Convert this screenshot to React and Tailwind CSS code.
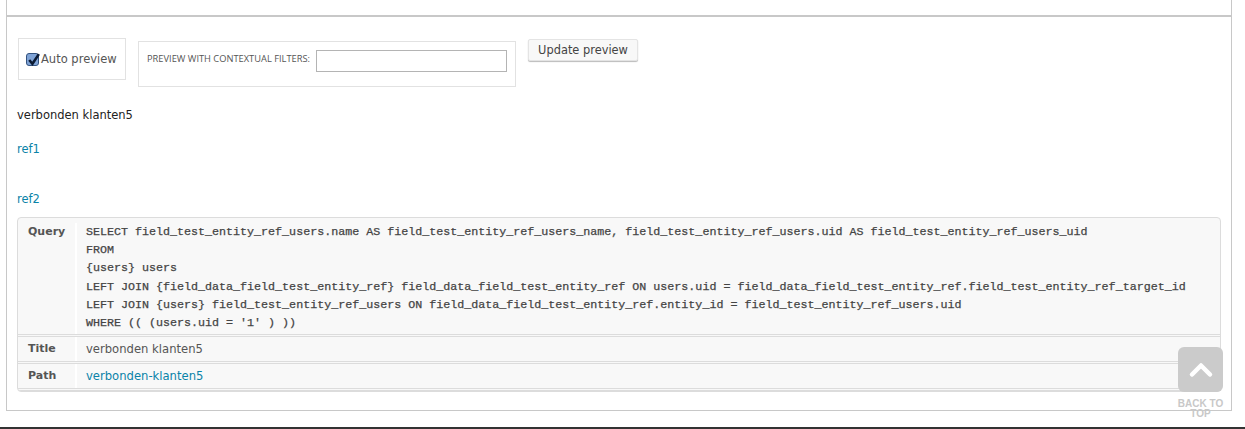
import { ChevronUp } from 'lucide-react';

const sqlLines = [
  'SELECT field_test_entity_ref_users.name AS field_test_entity_ref_users_name, field_test_entity_ref_users.uid AS field_test_entity_ref_users_uid',
  'FROM',
  '{users} users',
  'LEFT JOIN {field_data_field_test_entity_ref} field_data_field_test_entity_ref ON users.uid = field_data_field_test_entity_ref.field_test_entity_ref_target_id',
  'LEFT JOIN {users} field_test_entity_ref_users ON field_data_field_test_entity_ref.entity_id = field_test_entity_ref_users.uid',
  "WHERE (( (users.uid = '1' ) ))",
];

const InfoRow = ({ label, children, className }) => (
  <div className={`flex border-b-[3px] border-double border-[#dcdcdc] ${className}`}>
    <div className="w-[59px] shrink-0 self-stretch border-r-2 border-white pl-[10px] text-[11px] font-bold text-[#555]">{label}</div>
    <div className="min-w-0 flex-1 pl-[9px] text-[11.6px] text-[#555]">{children}</div>
  </div>
);

const App = () => {
  return (
    <div className="relative h-[429px] w-[1245px] overflow-hidden bg-white font-['DejaVu_Sans',sans-serif]">
      <div className="ml-[6px] h-[411px] w-[1226px] border border-[#c8c8c8] border-t-0 pt-[15px]">
        <div className="h-[2px] bg-[#c8c8c8]" />

        <div className="flex items-start pl-[11px] pt-[21px]">
          <label className="flex h-[42px] w-[108px] items-center border border-[#e2e2e2] pb-[1px] pl-[7px] pt-[1px] text-[11.5px] text-[#555]">
            <span className="relative mr-[2px] size-[13px] shrink-0 rounded-[3px] border border-[#33527f] bg-[#7fa3d6]">
              <input type="checkbox" defaultChecked readOnly className="absolute inset-0 appearance-none" />
              <svg viewBox="0 0 14 14" className="absolute -left-[1px] -top-[2px] size-[15px]" fill="none" stroke="#0b1a33" strokeWidth="2.4">
                <path d="M3 7.5 L6 11 L12 2" />
              </svg>
            </span>
            <span className="translate-y-[1px]">Auto preview</span>
          </label>
          <div className="ml-[12px] mt-[3px] flex h-[46px] w-[378px] items-start border border-[#e2e2e2] pl-[8px] pt-[8px]">
            <span className="mr-[6px] mt-[3px] whitespace-nowrap font-['Open_Sans',sans-serif] text-[9.3px] leading-[12px] text-[#555]">PREVIEW WITH CONTEXTUAL FILTERS:</span>
            <input type="text" className="h-[22px] w-[191px] border border-[#b4b4b4] bg-white" />
          </div>
          <button type="button" className="ml-[12px] mt-[1px] h-[22px] w-[110px] rounded-[2px] border border-[#e4e4e4] bg-[#f8f8f8] pt-[1px] text-[11.4px] text-[#444] shadow-[0_1px_1px_#bbb]">
            Update preview
          </button>
        </div>

        <div className="pl-[10px]">
          <div className="mt-[20px] text-[11.5px] leading-[16px] text-[#222]">verbonden klanten5</div>
          <div className="mt-[18px] text-[11.5px] leading-[16px] text-[#0a83a8]">ref1</div>
          <div className="mt-[34px] text-[11.5px] leading-[16px] text-[#0a83a8]">ref2</div>
        </div>

        <div className="ml-[10px] mt-[10px] w-[1204px] overflow-hidden rounded-[4px] border border-[#dcdcdc] bg-[#f8f8f8]">
          <InfoRow label="Query" className="h-[119px] pt-[5px] leading-[18px]">
            <div className="font-['Liberation_Mono',monospace] text-[11.68px] leading-[18.2px] whitespace-pre text-[#444] [-webkit-text-stroke:0.25px_#444]">
              {sqlLines.map((line) => (
                <div key={line}>{line}</div>
              ))}
            </div>
          </InfoRow>
          <InfoRow label="Title" className="h-[27px] items-center leading-[24px]">verbonden klanten5</InfoRow>
          <InfoRow label="Path" className="h-[27px] items-center border-b-0 leading-[24px]">
            <span className="text-[#0a83a8]">verbonden-klanten5</span>
          </InfoRow>
        </div>
      </div>

      <div className="absolute left-[1178px] top-[347px] flex w-[45px] flex-col items-center">
        <div className="flex size-[45px] items-center justify-center rounded-[6px] bg-[#cbcbcb]">
          <ChevronUp size={36} strokeWidth={3} className="text-white" />
        </div>
        <div className="mt-[7px] w-[50px] text-center font-['Liberation_Sans',sans-serif] text-[10px] font-bold leading-[10px] text-[#c8c8c8]">BACK TO TOP</div>
      </div>

      <div className="absolute bottom-0 left-0 h-[2px] w-full bg-[#333]" />
    </div>
  );
};

export default App;
